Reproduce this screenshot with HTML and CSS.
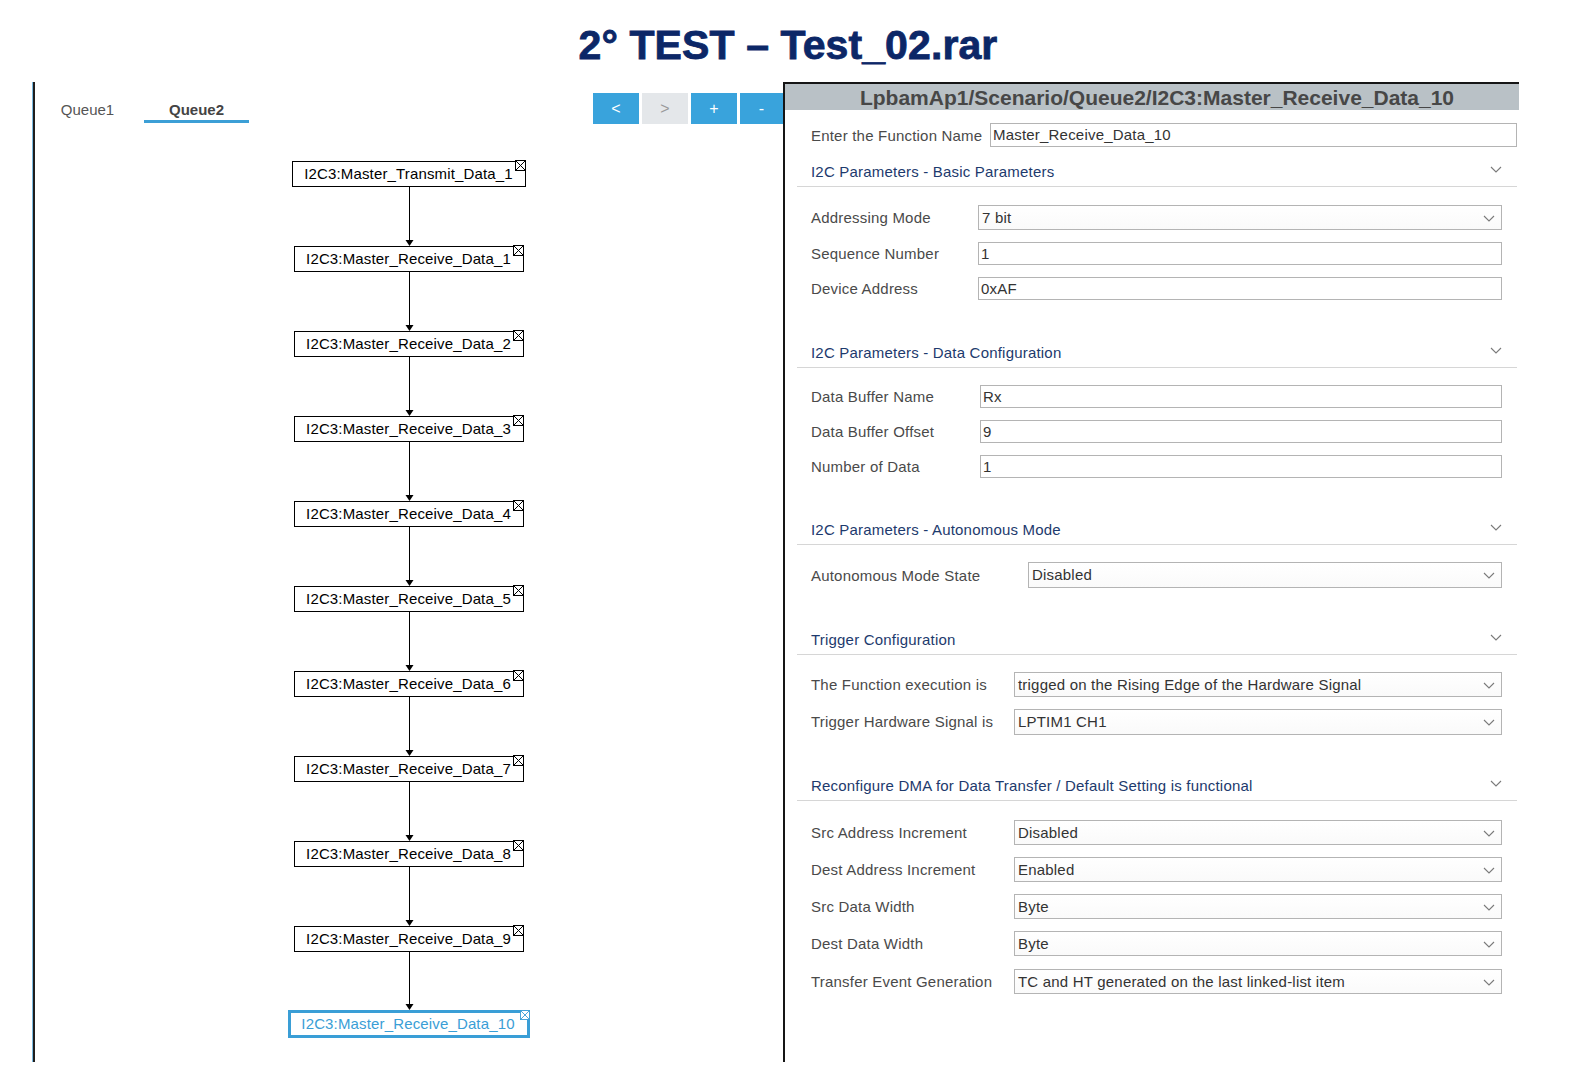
FILE: index.html
```html
<!DOCTYPE html>
<html>
<head>
<meta charset="utf-8">
<link rel="stylesheet" href="styles.css">
</head>
<body>
<div class="title">2° TEST – Test_02.rar</div>
<div class="main">
  <div class="left">
    <div class="topbar">
      <div class="tabs">
        <div class="tab">Queue1</div>
        <div class="tab active">Queue2</div>
      </div>
      <div class="btns">
        <div class="btn">&lt;</div>
        <div class="btn off">&gt;</div>
        <div class="btn">+</div>
        <div class="btn narrow">-</div>
      </div>
    </div>
    <div class="flow">
      <div class="node"><span>I2C3:Master_Transmit_Data_1</span><svg class="x" viewBox="0 0 11 11"><rect x="0.5" y="0.5" width="10" height="10" fill="#fff" stroke="#000"/><path d="M1 1L10 10M10 1L1 10" stroke="#000" stroke-width="1"/></svg></div>
      <svg class="link" viewBox="0 0 9 59"><line x1="4.5" y1="0" x2="4.5" y2="54" stroke="#000" stroke-width="1"/><path d="M0.5 53L8.5 53L4.5 59Z" fill="#000"/></svg>
      <div class="node"><span>I2C3:Master_Receive_Data_1</span><svg class="x" viewBox="0 0 11 11"><rect x="0.5" y="0.5" width="10" height="10" fill="#fff" stroke="#000"/><path d="M1 1L10 10M10 1L1 10" stroke="#000" stroke-width="1"/></svg></div>
      <svg class="link" viewBox="0 0 9 59"><line x1="4.5" y1="0" x2="4.5" y2="54" stroke="#000" stroke-width="1"/><path d="M0.5 53L8.5 53L4.5 59Z" fill="#000"/></svg>
      <div class="node"><span>I2C3:Master_Receive_Data_2</span><svg class="x" viewBox="0 0 11 11"><rect x="0.5" y="0.5" width="10" height="10" fill="#fff" stroke="#000"/><path d="M1 1L10 10M10 1L1 10" stroke="#000" stroke-width="1"/></svg></div>
      <svg class="link" viewBox="0 0 9 59"><line x1="4.5" y1="0" x2="4.5" y2="54" stroke="#000" stroke-width="1"/><path d="M0.5 53L8.5 53L4.5 59Z" fill="#000"/></svg>
      <div class="node"><span>I2C3:Master_Receive_Data_3</span><svg class="x" viewBox="0 0 11 11"><rect x="0.5" y="0.5" width="10" height="10" fill="#fff" stroke="#000"/><path d="M1 1L10 10M10 1L1 10" stroke="#000" stroke-width="1"/></svg></div>
      <svg class="link" viewBox="0 0 9 59"><line x1="4.5" y1="0" x2="4.5" y2="54" stroke="#000" stroke-width="1"/><path d="M0.5 53L8.5 53L4.5 59Z" fill="#000"/></svg>
      <div class="node"><span>I2C3:Master_Receive_Data_4</span><svg class="x" viewBox="0 0 11 11"><rect x="0.5" y="0.5" width="10" height="10" fill="#fff" stroke="#000"/><path d="M1 1L10 10M10 1L1 10" stroke="#000" stroke-width="1"/></svg></div>
      <svg class="link" viewBox="0 0 9 59"><line x1="4.5" y1="0" x2="4.5" y2="54" stroke="#000" stroke-width="1"/><path d="M0.5 53L8.5 53L4.5 59Z" fill="#000"/></svg>
      <div class="node"><span>I2C3:Master_Receive_Data_5</span><svg class="x" viewBox="0 0 11 11"><rect x="0.5" y="0.5" width="10" height="10" fill="#fff" stroke="#000"/><path d="M1 1L10 10M10 1L1 10" stroke="#000" stroke-width="1"/></svg></div>
      <svg class="link" viewBox="0 0 9 59"><line x1="4.5" y1="0" x2="4.5" y2="54" stroke="#000" stroke-width="1"/><path d="M0.5 53L8.5 53L4.5 59Z" fill="#000"/></svg>
      <div class="node"><span>I2C3:Master_Receive_Data_6</span><svg class="x" viewBox="0 0 11 11"><rect x="0.5" y="0.5" width="10" height="10" fill="#fff" stroke="#000"/><path d="M1 1L10 10M10 1L1 10" stroke="#000" stroke-width="1"/></svg></div>
      <svg class="link" viewBox="0 0 9 59"><line x1="4.5" y1="0" x2="4.5" y2="54" stroke="#000" stroke-width="1"/><path d="M0.5 53L8.5 53L4.5 59Z" fill="#000"/></svg>
      <div class="node"><span>I2C3:Master_Receive_Data_7</span><svg class="x" viewBox="0 0 11 11"><rect x="0.5" y="0.5" width="10" height="10" fill="#fff" stroke="#000"/><path d="M1 1L10 10M10 1L1 10" stroke="#000" stroke-width="1"/></svg></div>
      <svg class="link" viewBox="0 0 9 59"><line x1="4.5" y1="0" x2="4.5" y2="54" stroke="#000" stroke-width="1"/><path d="M0.5 53L8.5 53L4.5 59Z" fill="#000"/></svg>
      <div class="node"><span>I2C3:Master_Receive_Data_8</span><svg class="x" viewBox="0 0 11 11"><rect x="0.5" y="0.5" width="10" height="10" fill="#fff" stroke="#000"/><path d="M1 1L10 10M10 1L1 10" stroke="#000" stroke-width="1"/></svg></div>
      <svg class="link" viewBox="0 0 9 59"><line x1="4.5" y1="0" x2="4.5" y2="54" stroke="#000" stroke-width="1"/><path d="M0.5 53L8.5 53L4.5 59Z" fill="#000"/></svg>
      <div class="node"><span>I2C3:Master_Receive_Data_9</span><svg class="x" viewBox="0 0 11 11"><rect x="0.5" y="0.5" width="10" height="10" fill="#fff" stroke="#000"/><path d="M1 1L10 10M10 1L1 10" stroke="#000" stroke-width="1"/></svg></div>
      <svg class="link last-link" viewBox="0 0 9 58"><line x1="4.5" y1="0" x2="4.5" y2="53" stroke="#000" stroke-width="1"/><path d="M0.5 52L8.5 52L4.5 58Z" fill="#000"/></svg>
      <div class="node sel"><span>I2C3:Master_Receive_Data_10</span><svg class="x" viewBox="0 0 11 11"><rect x="0.5" y="0.5" width="10" height="10" fill="#fff" stroke="#3a9ed6"/><path d="M1 1L10 10M10 1L1 10" stroke="#3a9ed6" stroke-width="1"/></svg></div>
    </div>
  </div>

  <div class="right">
    <div class="phead">LpbamAp1/Scenario/Queue2/I2C3:Master_Receive_Data_10</div>
    <div class="fnrow">
      <div class="lbl">Enter the Function Name</div>
      <div class="inp">Master_Receive_Data_10</div>
    </div>

    <div class="sec s1">
      <div class="sec-head"><span>I2C Parameters - Basic Parameters</span><svg class="chev" viewBox="0 0 12 7"><path d="M1 1l5 5 5-5" fill="none" stroke="#7a7a7a" stroke-width="1.1"/></svg></div>
      <div class="rows">
        <div class="row"><div class="lbl">Addressing Mode</div><div class="selbox">7 bit<svg class="chev" viewBox="0 0 12 7"><path d="M1 1l5 5 5-5" fill="none" stroke="#7a7a7a" stroke-width="1.1"/></svg></div></div>
        <div class="row"><div class="lbl">Sequence Number</div><div class="inp">1</div></div>
        <div class="row"><div class="lbl">Device Address</div><div class="inp">0xAF</div></div>
      </div>
    </div>

    <div class="sec s2">
      <div class="sec-head"><span>I2C Parameters - Data Configuration</span><svg class="chev" viewBox="0 0 12 7"><path d="M1 1l5 5 5-5" fill="none" stroke="#7a7a7a" stroke-width="1.1"/></svg></div>
      <div class="rows">
        <div class="row"><div class="lbl">Data Buffer Name</div><div class="inp">Rx</div></div>
        <div class="row"><div class="lbl">Data Buffer Offset</div><div class="inp">9</div></div>
        <div class="row"><div class="lbl">Number of Data</div><div class="inp">1</div></div>
      </div>
    </div>

    <div class="sec s3">
      <div class="sec-head"><span>I2C Parameters - Autonomous Mode</span><svg class="chev" viewBox="0 0 12 7"><path d="M1 1l5 5 5-5" fill="none" stroke="#7a7a7a" stroke-width="1.1"/></svg></div>
      <div class="rows">
        <div class="row"><div class="lbl">Autonomous Mode State</div><div class="selbox tall">Disabled<svg class="chev" viewBox="0 0 12 7"><path d="M1 1l5 5 5-5" fill="none" stroke="#7a7a7a" stroke-width="1.1"/></svg></div></div>
      </div>
    </div>

    <div class="sec s4">
      <div class="sec-head"><span>Trigger Configuration</span><svg class="chev" viewBox="0 0 12 7"><path d="M1 1l5 5 5-5" fill="none" stroke="#7a7a7a" stroke-width="1.1"/></svg></div>
      <div class="rows">
        <div class="row"><div class="lbl">The Function execution is</div><div class="selbox">trigged on the Rising Edge of the Hardware Signal<svg class="chev" viewBox="0 0 12 7"><path d="M1 1l5 5 5-5" fill="none" stroke="#7a7a7a" stroke-width="1.1"/></svg></div></div>
        <div class="row"><div class="lbl">Trigger Hardware Signal is</div><div class="selbox tall">LPTIM1 CH1<svg class="chev" viewBox="0 0 12 7"><path d="M1 1l5 5 5-5" fill="none" stroke="#7a7a7a" stroke-width="1.1"/></svg></div></div>
      </div>
    </div>

    <div class="sec s5">
      <div class="sec-head"><span>Reconfigure DMA for Data Transfer / Default Setting is functional</span><svg class="chev" viewBox="0 0 12 7"><path d="M1 1l5 5 5-5" fill="none" stroke="#7a7a7a" stroke-width="1.1"/></svg></div>
      <div class="rows">
        <div class="row"><div class="lbl">Src Address Increment</div><div class="selbox">Disabled<svg class="chev" viewBox="0 0 12 7"><path d="M1 1l5 5 5-5" fill="none" stroke="#7a7a7a" stroke-width="1.1"/></svg></div></div>
        <div class="row"><div class="lbl">Dest Address Increment</div><div class="selbox">Enabled<svg class="chev" viewBox="0 0 12 7"><path d="M1 1l5 5 5-5" fill="none" stroke="#7a7a7a" stroke-width="1.1"/></svg></div></div>
        <div class="row"><div class="lbl">Src Data Width</div><div class="selbox">Byte<svg class="chev" viewBox="0 0 12 7"><path d="M1 1l5 5 5-5" fill="none" stroke="#7a7a7a" stroke-width="1.1"/></svg></div></div>
        <div class="row"><div class="lbl">Dest Data Width</div><div class="selbox">Byte<svg class="chev" viewBox="0 0 12 7"><path d="M1 1l5 5 5-5" fill="none" stroke="#7a7a7a" stroke-width="1.1"/></svg></div></div>
        <div class="row"><div class="lbl">Transfer Event Generation</div><div class="selbox">TC and HT generated on the last linked-list item<svg class="chev" viewBox="0 0 12 7"><path d="M1 1l5 5 5-5" fill="none" stroke="#7a7a7a" stroke-width="1.1"/></svg></div></div>
      </div>
    </div>
  </div>
</div>
</body>
</html>
```
FILE: styles.css
```css
* { box-sizing: border-box; }
html, body { margin: 0; padding: 0; background: #fff; }
body {
  width: 1586px;
  height: 1085px;
  font-family: "Liberation Sans", Arial, sans-serif;
  overflow: hidden;
}
.title {
  height: 82px;
  padding: 8px 10px 0 0;
  line-height: 74px;
  text-align: center;
  font-size: 41px;
  font-weight: bold;
  color: #0c2767;
  letter-spacing: 0.1px;
  -webkit-text-stroke: 0.8px #0c2767;
}
.main {
  display: flex;
  height: 980px;
  padding-left: 33px;
}
.left {
  width: 750px;
  height: 980px;
  border-left: 2px solid #1e1e1e;
  box-shadow: -1px 0 0 #7ab8de;
  display: flex;
  flex-direction: column;
}
.topbar {
  display: flex;
  justify-content: space-between;
  height: 41px;
}
.tabs { display: flex; gap: 4px; }
.tab {
  width: 105px;
  height: 41px;
  display: flex;
  align-items: flex-end;
  justify-content: center;
  padding-bottom: 1px;
  border-bottom: 3px solid transparent;
  font-size: 15px;
  line-height: 18px;
  color: #555;
}
.tab.active {
  border-bottom-color: #3c9fd6;
  font-weight: bold;
  color: #444;
}
.btns {
  display: flex;
  gap: 3px;
  margin-top: 11px;
}
.btn {
  width: 46px;
  height: 31px;
  background: #39a3dc;
  color: #fff;
  font-size: 16px;
  line-height: 31px;
  text-align: center;
}
.btn.narrow { width: 43px; }
.btn.off { background: #e4e7ea; color: #9a9a9a; }
.flow {
  margin-top: 38px;
  display: flex;
  flex-direction: column;
  align-items: center;
}
.node {
  position: relative;
  height: 26px;
  border: 1px solid #000;
  padding: 0 12px 0 11px;
  font-size: 15px;
  line-height: 24px;
  letter-spacing: 0.15px;
  color: #000;
  white-space: nowrap;
}
.node .x {
  position: absolute;
  top: -2px;
  right: -1px;
  width: 11px;
  height: 11px;
}
.node.sel {
  height: 28px;
  border: 3px solid #3a9ed6;
  color: #3a9ed6;
  line-height: 22px;
  padding: 0 12px 0 10px;
}
.node.sel .x { top: -3px; right: -3px; width: 10px; height: 10px; }
.link {
  display: block;
  width: 9px;
  height: 59px;
}
.link.last-link { height: 58px; }

.right {
  width: 736px;
  height: 980px;
  border-left: 2px solid #151515;
  border-top: 2px solid #151515;
  display: flex;
  flex-direction: column;
}
.phead {
  height: 26px;
  background: #b9c1c6;
  padding-left: 10px;
  text-align: center;
  font-size: 21px;
  font-weight: bold;
  line-height: 27px;
  color: #474747;
  white-space: nowrap;
}
.lbl {
  font-size: 15px;
  letter-spacing: 0.2px;
  color: #4a4a4a;
  white-space: nowrap;
}
.fnrow {
  display: grid;
  grid-template-columns: 179px 1fr;
  align-items: center;
  height: 24px;
  margin-top: 13px;
  padding: 0 2px 0 26px;
}
.fnrow .inp { height: 24px; line-height: 22px; }
.inp, .selbox {
  height: 23px;
  border: 1px solid #b4b4b4;
  background: #fff;
  padding-left: 2px;
  font-size: 15px;
  line-height: 21px;
  letter-spacing: 0.2px;
  color: #333;
  white-space: nowrap;
}
.selbox {
  position: relative;
  height: 25px;
  line-height: 23px;
  padding-left: 3px;
  background: linear-gradient(#fff, #fafafa);
}
.selbox.tall { height: 26px; line-height: 24px; }
.selbox .chev {
  position: absolute;
  right: 6px;
  top: 9px;
}
.chev { width: 12px; height: 7px; display: block; }
.sec { margin: 32px 2px 0 12px; }
.sec.s1 { margin-top: 11px; }
.sec-head {
  height: 29px;
  display: flex;
  align-items: center;
  justify-content: space-between;
  padding: 0 15px 1px 14px;
  border-bottom: 1px solid #d6d6d6;
  font-size: 15px;
  letter-spacing: 0.2px;
  color: #1d3a6d;
}
.sec-head .chev { margin-top: -4px; margin-right: 0; }
.rows { padding: 12px 15px 0 14px; }
.row {
  display: grid;
  align-items: center;
  height: 37px;
}
.s1 .rows { padding-top: 13px; }
.s1 .row { grid-template-columns: 167px 1fr; height: 35.5px; }
.s2 .rows { padding-top: 11.5px; }
.s2 .row { grid-template-columns: 169px 1fr; height: 35px; }
.s3 .rows { padding-top: 11.5px; }
.s3 .row { grid-template-columns: 217px 1fr; }
.s4 .rows { padding-top: 11.5px; }
.s4 .row { grid-template-columns: 203px 1fr; }
.s5 .rows { padding-top: 12.5px; }
.s5 .row { grid-template-columns: 203px 1fr; height: 37.25px; }
```
